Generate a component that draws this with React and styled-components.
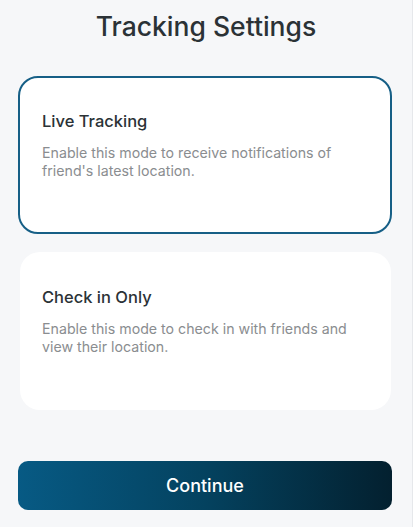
import React, { useState } from "react";
import styled, { createGlobalStyle } from "styled-components";

const GlobalStyle = createGlobalStyle`
  html, body {
    margin: 0;
    padding: 0;
    background: #f6f7f9;
  }
  body {
    font-family: Inter, "Noto Sans", sans-serif;
  }
`;

const modes = [
  {
    id: "live",
    title: "Live Tracking",
    text: "Enable this mode to receive notifications of friend's latest location.",
  },
  {
    id: "checkin",
    title: "Check in Only",
    text: "Enable this mode to check in with friends and view their location.",
  },
];

const App = () => {
  const [selected, setSelected] = useState("live");

  return (
    <>
      <GlobalStyle />
      <Page>
        <Title>Tracking Settings</Title>
        <Options>
          {modes.map((m) => (
            <Card
              key={m.id}
              $active={selected === m.id}
              onClick={() => setSelected(m.id)}
            >
              <CardTitle>{m.title}</CardTitle>
              <CardText>{m.text}</CardText>
            </Card>
          ))}
        </Options>
        <ContinueButton>Continue</ContinueButton>
      </Page>
    </>
  );
};

export default App;

const Page = styled.main`
  display: flex;
  flex-direction: column;
  width: 413px;
  height: 527px;
  box-sizing: border-box;
  padding: 9px 20px 0 18px;
  border-right: 1px solid #e6e8eb;
`;

const Title = styled.h1`
  margin: 0;
  text-align: center;
  font-size: 26.5px;
  font-weight: 450;
  color: #2b3236;
  line-height: 34px;
  padding-left: 2px;
`;

const Options = styled.div`
  display: flex;
  flex-direction: column;
  gap: 18px;
  margin-top: 33px;
`;

const Card = styled.div`
  box-sizing: border-box;
  height: 158px;
  padding: ${(p) => (p.$active ? "33px 22px 0" : "35px 22px 0")};
  margin: ${(p) => (p.$active ? "0" : "0 1px 0 2px")};
  background: #fff;
  border-radius: 20px;
  border: ${(p) => (p.$active ? "2px solid #165f86" : "none")};
  cursor: pointer;
`;

const CardTitle = styled.h2`
  margin: 0;
  font-size: 16.5px;
  font-weight: 550;
  color: #2b3236;
  line-height: 20px;
`;

const CardText = styled.p`
  margin: 13px 0 0;
  font-size: 14.2px;
  line-height: 18px;
  color: #8a8d90;
  max-width: 320px;
`;

const ContinueButton = styled.button`
  margin-top: 51px;
  height: 49px;
  border: none;
  border-radius: 10px;
  background: linear-gradient(90deg, #075a84 0%, #04425f 50%, #03202f 100%);
  color: #fff;
  font-family: Inter, "Noto Sans", sans-serif;
  font-size: 18px;
  font-weight: 500;
  cursor: pointer;
`;
